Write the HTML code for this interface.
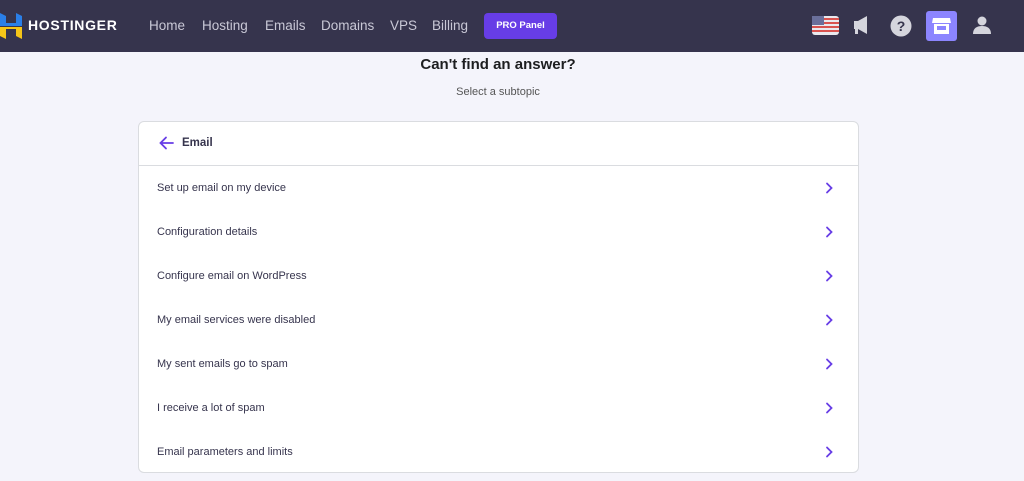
<!DOCTYPE html>
<html><head><meta charset="utf-8"><style>
*{box-sizing:border-box;margin:0;padding:0}
body{width:1024px;height:481px;overflow:hidden;background:#f4f4fb;font-family:"Liberation Sans",sans-serif;position:relative}
.top{position:absolute;left:0;top:0;width:1024px;height:52px;background:#36344d}
.brand{position:absolute;left:28px;top:17px;color:#fff;font-weight:bold;font-size:14px;letter-spacing:0.7px}
.nav{position:absolute;top:18px;color:#c9c8d6;font-size:13.5px}
.pro{position:absolute;left:484px;top:13px;width:73px;height:26px;background:#673de6;border-radius:4px;color:#fff;font-size:9.5px;font-weight:bold;text-align:center;line-height:26px}
h1{position:absolute;left:0;width:996px;top:56px;text-align:center;font-size:15px;color:#1d1e20}
.sub{position:absolute;left:0;width:996px;top:86px;text-align:center;font-size:11px;color:#555}
.card{position:absolute;left:138px;top:121px;width:721px;height:352px;background:#fff;border:1px solid #dadce0;border-radius:6px}
.hd{height:44px;border-bottom:1px solid #dadce0;position:relative}
.hd span{position:absolute;left:43px;top:15px;font-weight:bold;font-size:11.5px;color:#36344d}
.row{height:44px;position:relative;font-size:11px;color:#36344d}
.row span{position:absolute;left:18px;top:16px}
.row svg{position:absolute;left:686px;top:16px}
</style></head><body>
<div class="top">
<svg style="position:absolute;left:0;top:13px" width="22" height="26" viewBox="0 0 22 26"><path d="M0 0l6 3v7l10 0V0l6 3v10H0z" fill="#2a7fe8"/><path d="M0 14h22v12l-6-3v-7H6v10l-6-3z" fill="#f5c518"/></svg>
<div class="brand">HOSTINGER</div>
<div class="nav" style="left:149px">Home</div>
<div class="nav" style="left:202px">Hosting</div>
<div class="nav" style="left:265px">Emails</div>
<div class="nav" style="left:321px">Domains</div>
<div class="nav" style="left:390px">VPS</div>
<div class="nav" style="left:432px">Billing</div>
<div class="pro">PRO Panel</div>
<svg style="position:absolute;left:812px;top:16px" width="27" height="19"><rect width="27" height="19" rx="3" fill="#e9e9ee"/><g fill="#d9534f"><rect y="2" width="27" height="2"/><rect y="6" width="27" height="2"/><rect y="10" width="27" height="2"/><rect y="14" width="27" height="2"/></g><rect width="12" height="9" fill="#6a6f9a"/></svg>
<svg style="position:absolute;left:853px;top:15px" width="20" height="20"><path d="M1 6h4l9-5v18l-9-5H5v5H2v-5H1z" fill="#d5d5dd"/></svg>
<svg style="position:absolute;left:890px;top:15px" width="22" height="22"><circle cx="11" cy="11" r="10.5" fill="#d5d5dd"/><text x="11" y="16" text-anchor="middle" font-size="14" font-weight="bold" fill="#36344d" font-family="Liberation Sans">?</text></svg>
<div style="position:absolute;left:926px;top:11px;width:31px;height:30px;background:#8c85ff;border-radius:3px"></div>
<svg style="position:absolute;left:932px;top:17px" width="19" height="18"><path d="M1 1h17l1 5H0z M2 7h15v10H2z" fill="#fff"/><rect x="5" y="9" width="9" height="4" fill="#8c85ff"/></svg>
<svg style="position:absolute;left:973px;top:16px" width="18" height="18"><circle cx="9" cy="5" r="4.5" fill="#d5d5dd"/><path d="M0 18c0-6 4-8 9-8s9 2 9 8z" fill="#d5d5dd"/></svg>
</div>
<h1>Can't find an answer?</h1>
<div class="sub">Select a subtopic</div>
<div class="card">
<div class="hd"><svg style="position:absolute;left:20px;top:14px" width="15" height="14"><path d="M14 7H2M7 1.5L1.5 7 7 12.5" stroke="#673de6" stroke-width="1.8" fill="none" stroke-linecap="round"/></svg><span>Email</span></div>
<div class="row"><span>Set up email on my device</span><svg width="8" height="12"><path d="M2 1.5l4.5 4.5L2 10.5" stroke="#673de6" stroke-width="1.8" fill="none" stroke-linecap="round"/></svg></div>
<div class="row"><span>Configuration details</span><svg width="8" height="12"><path d="M2 1.5l4.5 4.5L2 10.5" stroke="#673de6" stroke-width="1.8" fill="none" stroke-linecap="round"/></svg></div>
<div class="row"><span>Configure email on WordPress</span><svg width="8" height="12"><path d="M2 1.5l4.5 4.5L2 10.5" stroke="#673de6" stroke-width="1.8" fill="none" stroke-linecap="round"/></svg></div>
<div class="row"><span>My email services were disabled</span><svg width="8" height="12"><path d="M2 1.5l4.5 4.5L2 10.5" stroke="#673de6" stroke-width="1.8" fill="none" stroke-linecap="round"/></svg></div>
<div class="row"><span>My sent emails go to spam</span><svg width="8" height="12"><path d="M2 1.5l4.5 4.5L2 10.5" stroke="#673de6" stroke-width="1.8" fill="none" stroke-linecap="round"/></svg></div>
<div class="row"><span>I receive a lot of spam</span><svg width="8" height="12"><path d="M2 1.5l4.5 4.5L2 10.5" stroke="#673de6" stroke-width="1.8" fill="none" stroke-linecap="round"/></svg></div>
<div class="row"><span>Email parameters and limits</span><svg width="8" height="12"><path d="M2 1.5l4.5 4.5L2 10.5" stroke="#673de6" stroke-width="1.8" fill="none" stroke-linecap="round"/></svg></div>
</div>
</body></html>
